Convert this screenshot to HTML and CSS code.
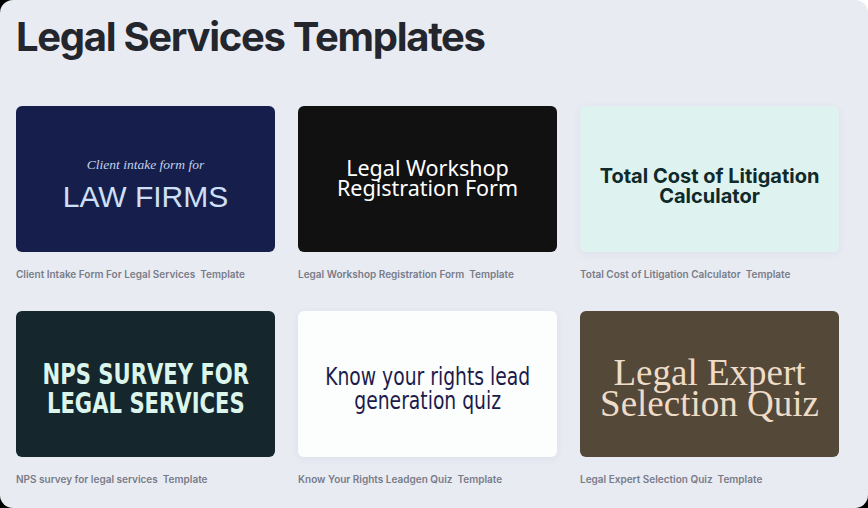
FILE: index.html
```html
<!DOCTYPE html>
<html>
<head>
<meta charset="utf-8">
<link rel="stylesheet" href="styles.css">
</head>
<body>
<main class="page">
  <h1 class="title">Legal Services Templates</h1>
  <section class="grid">
    <article class="item">
      <div class="card card-law">
        <div class="law-sub">Client intake form for</div>
        <div class="law-main">LAW FIRMS</div>
      </div>
      <p class="caption">Client Intake Form For Legal Services&nbsp; Template</p>
    </article>
    <article class="item">
      <div class="card card-workshop">
        <div class="workshop-text">Legal Workshop<br>Registration Form</div>
      </div>
      <p class="caption">Legal Workshop Registration Form&nbsp; Template</p>
    </article>
    <article class="item">
      <div class="card card-cost">
        <div class="cost-text">Total Cost of Litigation<br>Calculator</div>
      </div>
      <p class="caption">Total Cost of Litigation Calculator&nbsp; Template</p>
    </article>
    <article class="item">
      <div class="card card-nps">
        <div class="nps-text">NPS SURVEY FOR<br>LEGAL SERVICES</div>
      </div>
      <p class="caption">NPS survey for legal services&nbsp; Template</p>
    </article>
    <article class="item">
      <div class="card card-rights">
        <div class="rights-text">Know your rights lead<br>generation quiz</div>
      </div>
      <p class="caption">Know Your Rights Leadgen Quiz&nbsp; Template</p>
    </article>
    <article class="item">
      <div class="card card-expert">
        <div class="expert-text">Legal Expert<br>Selection Quiz</div>
      </div>
      <p class="caption">Legal Expert Selection Quiz&nbsp; Template</p>
    </article>
  </section>
</main>
</body>
</html>
```
FILE: styles.css
```css
html, body {
  margin: 0;
  padding: 0;
  height: 100%;
}
body {
  background: #000 linear-gradient(#fff, #fff) no-repeat top right / 16px 16px;
  font-family: Inter, "Liberation Sans", sans-serif;
}
.page {
  box-sizing: border-box;
  height: 508px;
  background: #e9ebf3;
  border-radius: 13px;
  padding: 13px 16px 0 16px;
  overflow: hidden;
}
.title {
  margin: 0;
  font-family: Inter, "Liberation Sans", sans-serif;
  font-size: 40px;
  line-height: 48px;
  font-weight: 700;
  letter-spacing: -1.3px;
  color: #24262d;
}
.grid {
  margin-top: 45px;
  display: grid;
  grid-template-columns: repeat(3, 259px);
  column-gap: 23px;
  row-gap: 30px;
}
.item {
  display: flex;
  flex-direction: column;
}
.card {
  height: 146px;
  border-radius: 6px;
  display: flex;
  flex-direction: column;
  align-items: center;
  justify-content: center;
  text-align: center;
}
.caption {
  margin: 15px 0 0 0;
  font-size: 10px;
  line-height: 14px;
  font-weight: 600;
  letter-spacing: 0;
  color: #787c88;
  white-space: nowrap;
}
.card-law {
  background: #161f4c;
  color: #cfe0f6;
}
.law-sub {
  font-family: "Liberation Serif", serif;
  font-style: italic;
  font-size: 13.5px;
  line-height: 16px;
  color: #c2d1ea;
  margin-top: 12px;
}
.law-main {
  font-family: "Liberation Sans", sans-serif;
  font-size: 30px;
  line-height: 35px;
  margin-top: 6px;
}
.card-workshop {
  background: #111112;
  color: #ffffff;
}
.workshop-text {
  font-family: "Noto Sans", sans-serif;
  font-size: 21.5px;
  line-height: 20px;
  font-weight: 400;
  margin-top: -2px;
}
.card-cost {
  background: #def3ef;
  color: #10292a;
  box-shadow: 0 2px 8px rgba(40, 60, 90, 0.06);
}
.cost-text {
  font-family: Inter, "Liberation Sans", sans-serif;
  font-weight: 700;
  font-size: 20px;
  line-height: 20px;
  margin-top: 13px;
}
.card-nps {
  background: #15272c;
  color: #dcf5ec;
}
.nps-text {
  font-family: "DejaVu Sans", sans-serif;
  font-weight: 700;
  font-size: 28px;
  line-height: 29px;
  transform: scaleX(0.755);
  white-space: nowrap;
  margin-top: 10px;
}
.card-rights {
  background: #fcfefd;
  color: #1d1b4b;
  box-shadow: 0 2px 8px rgba(40, 60, 90, 0.06);
}
.rights-text {
  font-family: "DejaVu Sans", sans-serif;
  font-size: 25px;
  line-height: 24px;
  transform: scaleX(0.75);
  white-space: nowrap;
  margin-top: 9px;
}
.card-expert {
  background: #544838;
  color: #efdcc8;
}
.expert-text {
  font-family: "Liberation Serif", serif;
  font-size: 37px;
  line-height: 31px;
  margin-top: 8px;
}
```
